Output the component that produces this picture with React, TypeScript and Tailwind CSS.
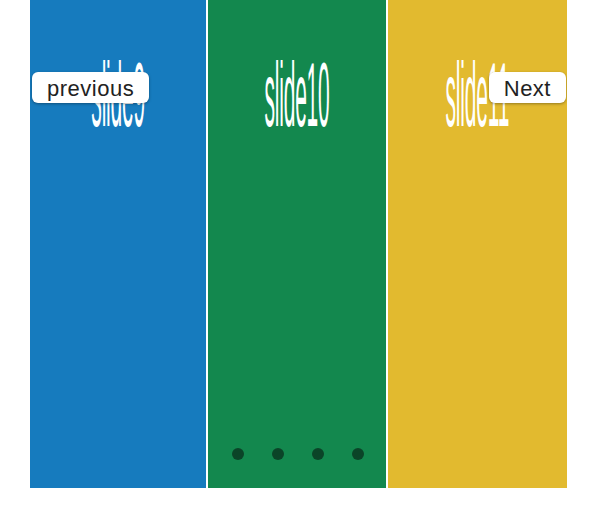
const slides = [
  { label: 'slide9', bg: 'bg-[#167bbe]', w: 'w-[177px]' },
  { label: 'slide10', bg: 'bg-[#13884e]', w: 'w-[178px]' },
  { label: 'slide11', bg: 'bg-[#e2ba2f]', w: 'w-[180px]' },
]

export default function App() {
  return (
    <div className="w-[592px] h-[516px] bg-white font-['Liberation_Sans',Arial,sans-serif]">
      <div className="relative ml-[30px] w-[537px] h-[488px] flex gap-[2px] overflow-hidden">
        {slides.map((s) => (
          <div key={s.label} className={`${s.bg} ${s.w} h-full flex justify-center pt-[85px]`}>
            <span className="text-white text-[21px] leading-none h-[22px] scale-y-[4.3] origin-center tracking-[-0.2px]">
              {s.label}
            </span>
          </div>
        ))}

        {/* Nav buttons */}
        <button className="absolute left-[2px] top-[72px] h-[31px] px-[15px] pt-[3px] bg-white rounded-[6px] shadow-[0_1px_3px_rgba(0,0,0,0.35)] text-[#222] text-[22px] leading-none tracking-[0.5px]">
          previous
        </button>
        <button className="absolute right-[1px] top-[72px] h-[31px] px-[15px] pt-[3px] bg-white rounded-[6px] shadow-[0_1px_3px_rgba(0,0,0,0.35)] text-[#222] text-[22px] leading-none tracking-[0.5px]">
          Next
        </button>

        {/* Pagination */}
        <div className="absolute left-[202px] top-[448px] flex gap-[28px]">
          {[0, 1, 2, 3].map((i) => (
            <span key={i} className="w-[12px] h-[12px] rounded-full bg-[#0b4428]" />
          ))}
        </div>
      </div>
    </div>
  )
}
